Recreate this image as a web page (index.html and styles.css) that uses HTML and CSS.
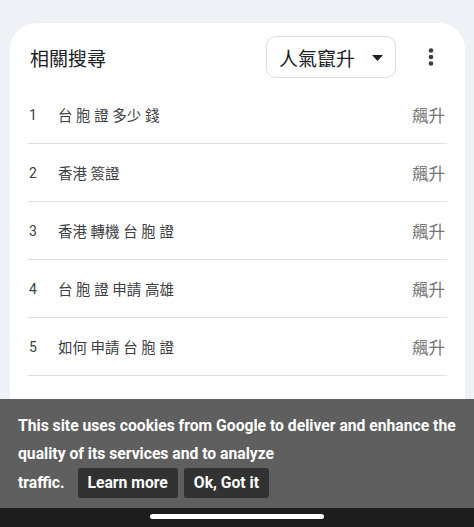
FILE: index.html
```html
<!DOCTYPE html>
<html lang="zh-Hant">
<head>
<meta charset="utf-8">
<title>相關搜尋</title>
<link rel="stylesheet" href="styles.css">
</head>
<body>
<div class="card">
  <div class="header">
    <div class="title">相關搜尋</div>
    <div class="dropdown">
      <span class="dd-label">人氣竄升</span>
      <svg class="caret" width="11" height="6" viewBox="0 0 11 6"><path d="M0 0h11L5.5 6z" fill="#202124"/></svg>
    </div>
    <div class="more">
      <svg width="6" height="18" viewBox="0 0 6 18"><circle cx="3" cy="2.5" r="2.3" fill="#3c4043"/><circle cx="3" cy="9" r="2.3" fill="#3c4043"/><circle cx="3" cy="15.5" r="2.3" fill="#3c4043"/></svg>
    </div>
  </div>
  <div class="list">
    <div class="row"><span class="num">1</span><span class="term">台 胞 證 多少 錢</span><span class="tag">飆升</span></div>
    <div class="row"><span class="num">2</span><span class="term">香港 簽證</span><span class="tag">飆升</span></div>
    <div class="row"><span class="num">3</span><span class="term">香港 轉機 台 胞 證</span><span class="tag">飆升</span></div>
    <div class="row"><span class="num">4</span><span class="term">台 胞 證 申請 高雄</span><span class="tag">飆升</span></div>
    <div class="row"><span class="num">5</span><span class="term">如何 申請 台 胞 證</span><span class="tag">飆升</span></div>
    <div class="row empty"></div>
  </div>
</div>

<div class="cookie">
  <p class="cookie-text">This site uses cookies from Google to deliver and enhance the quality of its services and to analyze <span class="last">traffic.<span class="actions"><a class="btn">Learn more</a><a class="btn">Ok, Got it</a></span></span></p>
</div>
<div class="navbar"><div class="pill"></div></div>
</body>
</html>
```

FILE: styles.css
```css
html, body {
  margin: 0;
  padding: 0;
  height: 527px;
  overflow: hidden;
}
body {
  background: #eef2f7;
  font-family: Roboto, "Noto Sans CJK TC", "Noto Sans", sans-serif;
  color: #202124;
  position: relative;
}
.card {
  margin: 23px 9px 0 10px;
  background: #ffffff;
  border-radius: 26px 26px 0 0;
  height: 520px;
}
.header {
  display: flex;
  align-items: center;
  padding: 13px 22px 0 20px;
}
.title {
  flex: 1;
  font-size: 19px;
  color: #202124;
}
.dropdown {
  box-sizing: border-box;
  width: 130px;
  height: 42px;
  border: 1px solid #dadce0;
  border-radius: 10px;
  display: flex;
  align-items: center;
  justify-content: space-between;
  padding: 0 12px 0 12px;
  margin-right: 23px;
}
.dd-label {
  font-size: 19px;
  color: #202124;
}
.caret { display: block; margin-top: 1px; }
.more {
  width: 24px;
  display: flex;
  justify-content: center;
}
.more svg { display: block; }
.list {
  margin-top: 8px;
  padding: 0 18px;
}
.row {
  height: 57px;
  border-bottom: 1px solid #e0e0e0;
  display: flex;
  align-items: center;
}
.row.empty { border-bottom: none; }
.num {
  width: 30px;
  padding-left: 1px;
  box-sizing: border-box;
  font-size: 14px;
  color: #3c4043;
}
.term {
  flex: 1;
  font-size: 14.5px;
  color: #3c4043;
}
.tag {
  font-size: 16.5px;
  color: #757575;
  margin-right: 2px;
}
.cookie {
  position: absolute;
  left: 0;
  right: 0;
  top: 399px;
  height: 109px;
  background: #5f5f5f;
  box-sizing: border-box;
  padding: 13px 6px 0 18px;
}
.cookie-text {
  margin: 0;
  font-size: 15.7px;
  font-weight: bold;
  line-height: 28px;
  color: #ffffff;
}
.last { white-space: nowrap; }
.actions {
  display: inline-flex;
  gap: 6px;
  margin-left: 13px;
}
.btn {
  display: inline-block;
  background: #323232;
  color: #ffffff;
  border-radius: 3px;
  padding: 1px 10px;
  line-height: 28px;
}
.navbar {
  position: absolute;
  left: 0;
  right: 0;
  top: 508px;
  height: 19px;
  background: #1c1c1c;
}
.pill {
  position: absolute;
  left: 150px;
  top: 6px;
  width: 174px;
  height: 5px;
  border-radius: 3px;
  background: #ffffff;
}
```
